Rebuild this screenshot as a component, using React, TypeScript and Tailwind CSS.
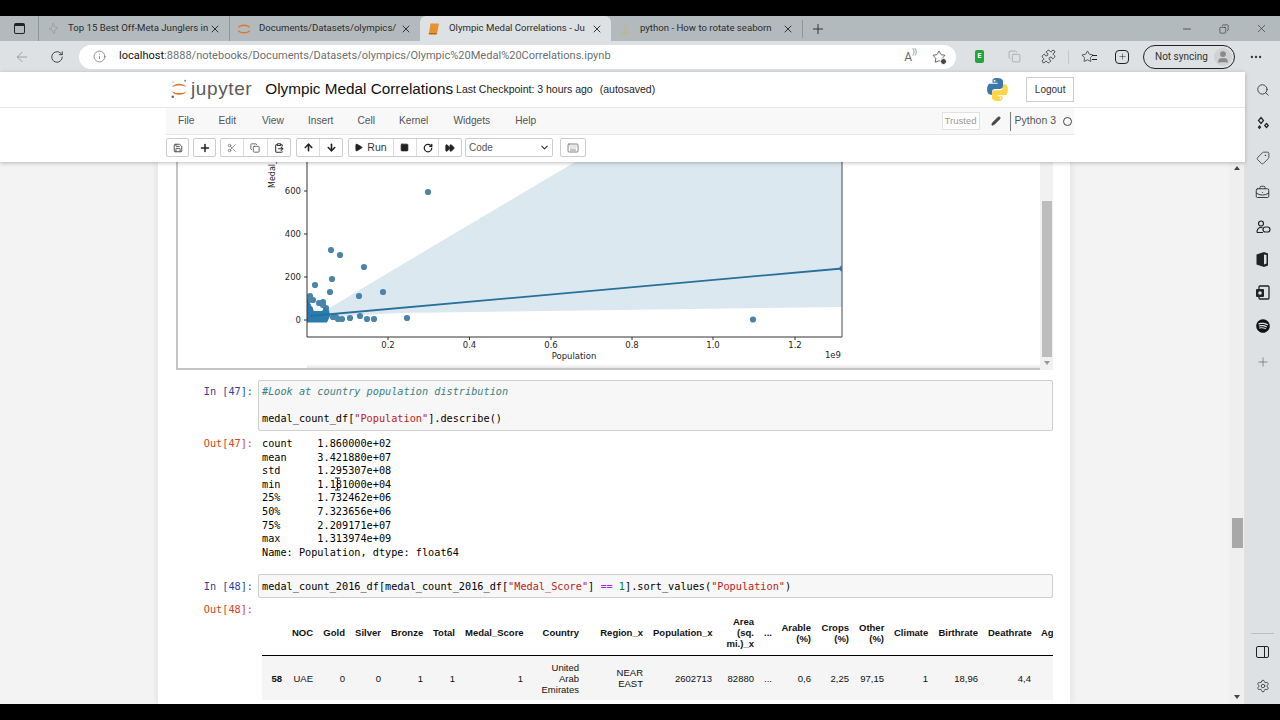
import {
  ArrowDown,
  ArrowLeft,
  ArrowUp,
  BriefcaseBusiness,
  ChevronDown,
  ClipboardPaste,
  Copy,
  FastForward,
  Info,
  Keyboard,
  Minus,
  MoreHorizontal,
  Pencil,
  Play,
  Plus,
  Puzzle,
  RotateCw,
  Save,
  Scissors,
  Search,
  Settings,
  Square,
  Star,
  Tag,
  User,
  X,
} from "lucide-react";
import { FaSpotify } from "react-icons/fa";

const tabs = [
  { title: "Top 15 Best Off-Meta Junglers in", icon: "game", divider: true },
  { title: "Documents/Datasets/olympics/", icon: "jupyter", divider: true },
  { title: "Olympic Medal Correlations - Ju", icon: "book", active: true },
  { title: "python - How to rotate seaborn", icon: "so" },
];

const outputLines = [
  "count    1.860000e+02",
  "mean     3.421880e+07",
  "std      1.295307e+08",
  "min      1.181000e+04",
  "25%      1.732462e+06",
  "50%      7.323656e+06",
  "75%      2.209171e+07",
  "max      1.313974e+09",
  "Name: Population, dtype: float64",
];

const colWidths = [25, 31, 32, 36, 42, 32, 68, 56, 64, 69, 42, 17, 40, 38, 35, 44, 50, 53, 60];

const headers = [
  "",
  "NOC",
  "Gold",
  "Silver",
  "Bronze",
  "Total",
  "Medal_Score",
  "Country",
  "Region_x",
  "Population_x",
  "Area (sq. mi.)_x",
  "...",
  "Arable (%)",
  "Crops (%)",
  "Other (%)",
  "Climate",
  "Birthrate",
  "Deathrate",
  "Ag",
];

const row = [
  "58",
  "UAE",
  "0",
  "0",
  "1",
  "1",
  "1",
  "United Arab Emirates",
  "NEAR\nEAST",
  "2602713",
  "82880",
  "...",
  "0,6",
  "2,25",
  "97,15",
  "1",
  "18,96",
  "4,4",
  "",
];

const scatter = [
  [428, 192], [331, 250], [340, 255], [364, 267], [332, 279], [315, 285], [330, 292], [359, 296],
  [383, 292], [407, 318], [350, 318], [360, 316], [367, 319], [374, 319], [310, 296], [313, 300],
  [319, 303], [323, 302], [326, 308], [323, 305], [333, 317], [336, 317], [338, 319], [342, 319],
  [753, 319.5], [842.5, 268.5], [308, 301], [308, 306], [310, 309],
];

function JupyterMark({ size = 22 }: { size?: number }) {
  return (
    <svg width={size} height={size + 3} viewBox="0 0 22 25" fill="none">
      <path d="M2.5 10.5C4 5 17 5 19 10.5C16 7.6 6 7.6 2.5 10.5Z" fill="#e3762c" />
      <path d="M2.5 15C4 20.5 17 20.5 19 15C16 18 6 18 2.5 15Z" fill="#e3762c" />
      <circle cx="17.5" cy="3" r="1.2" fill="#8a8a8a" />
      <circle cx="3.2" cy="21.5" r="1.5" fill="#666" />
      <circle cx="3.4" cy="4.5" r="0.8" fill="#999" />
    </svg>
  );
}

function PythonLogo() {
  const half = "M12 1C6.8 1 7.2 3.2 7.2 3.2v2.4h4.9v.8H5.3S2 6 2 11.6 4.9 17 4.9 17h1.8v-2.6s-.1-3 2.9-3h4.9s2.8 0 2.8-2.7V3.9S17 1 12 1z";
  return (
    <svg width="25" height="25" viewBox="0 0 24 24">
      <path d={half} fill="#3c78aa" />
      <circle cx="9.2" cy="3.6" r="0.9" fill="#fff" />
      <path d={half} fill="#fdd645" transform="rotate(180 12 12)" />
      <circle cx="14.8" cy="20.4" r="0.9" fill="#fff" />
    </svg>
  );
}

function TabIcon({ kind }: { kind: string }) {
  if (kind === "jupyter") {
    return (
      <svg width="14" height="14" viewBox="0 0 14 14" fill="none" stroke="#e3762c" strokeWidth="1.4">
        <path d="M1.5 5.5C3 2.5 11 2.5 12.5 5.5" />
        <path d="M1.5 8.5C3 11.5 11 11.5 12.5 8.5" />
      </svg>
    );
  }
  if (kind === "book") {
    return (
      <svg width="14" height="14" viewBox="0 0 14 14">
        <path d="M3.5 1.5h8.5l-1.8 9.5H2L3.5 1.5z" fill="#e8912d" />
        <path d="M2 11h8l-.3 1.6H2.3C1.5 12.6 1.5 11 2 11z" fill="#b9651a" />
      </svg>
    );
  }
  if (kind === "so") {
    return (
      <svg width="14" height="14" viewBox="0 0 14 14" fill="none" stroke="#c0b48e" strokeWidth="1">
        <path d="M3 9v3h8V9M5 10.5h4M5 8.5l4 .5M5.5 6.5l3.8 1.2M6.5 4.5l3.2 2.2M8.5 2.5l2 3" />
      </svg>
    );
  }
  return (
    <svg width="14" height="14" viewBox="0 0 14 14" fill="none" stroke="#9ea3a4" strokeWidth="1">
      <path d="M7 1l2 4 3 1-3 2-1 4-2-4-3-1 3-2 1-4z" />
    </svg>
  );
}

function ToolButton({ children, className = "" }: { children: React.ReactNode; className?: string }) {
  return (
    <div className={`flex items-center justify-center border-r border-[#dcdcdc] last:border-r-0 ${className}`}>
      {children}
    </div>
  );
}

function ScatterPlot() {
  const xTicks = [
    [388, "0.2"],
    [469.5, "0.4"],
    [551, "0.6"],
    [632, "0.8"],
    [713, "1.0"],
    [795, "1.2"],
  ] as const;
  const yTicks = [
    [191, "600"],
    [234, "400"],
    [277, "200"],
    [320, "0"],
  ] as const;
  return (
    <svg width="864" height="207" viewBox="176 162 864 207" className="block">
      <polygon
        points="326,310 440,242 575,162 842,162 842,307 620,310 400,313 345,316 326,316"
        fill="#dce8f0"
      />
      {scatter.map(([x, y]) => (
        <circle key={`${x}-${y}`} cx={x} cy={y} r="3.1" fill="#4a84ab" />
      ))}
      <path d="M307 299L311 306L314 311L322 311L325 307L329 310L330 316L327 322.5L307 322.5Z" fill="#2a7bae" />
      <line x1="310" y1="316" x2="842" y2="268.5" stroke="#286f9c" strokeWidth="1.8" />
      <rect x="176" y="162" width="131" height="207" fill="#fff" />
      <rect x="842" y="162" width="6" height="180" fill="#fff" />
      <path d="M307 162V337H842" fill="none" stroke="#333" strokeWidth="1" />
      <path d="M842 162V337" fill="none" stroke="#666" strokeWidth="1.2" />
      {xTicks.map(([x, label]) => (
        <g key={label}>
          <line x1={x} y1="337" x2={x} y2="340" stroke="#333" />
          <text x={x} y="348" textAnchor="middle" fontSize="8.5" fill="#262626" fontFamily="'DejaVu Sans', sans-serif">
            {label}
          </text>
        </g>
      ))}
      {yTicks.map(([y, label]) => (
        <g key={label}>
          <line x1="304" y1={y} x2="307" y2={y} stroke="#333" />
          <text x="301" y={y + 3} textAnchor="end" fontSize="8.5" fill="#262626" fontFamily="'DejaVu Sans', sans-serif">
            {label}
          </text>
        </g>
      ))}
      <text x="574" y="359" textAnchor="middle" fontSize="8.5" fill="#262626" fontFamily="'DejaVu Sans', sans-serif">
        Population
      </text>
      <text x="841" y="358" textAnchor="end" fontSize="8.5" fill="#262626" fontFamily="'DejaVu Sans', sans-serif">
        1e9
      </text>
      <text
        transform="translate(275 188) rotate(-90)"
        fontSize="8"
        fill="#262626"
        fontFamily="'DejaVu Sans', sans-serif"
      >
        Medal_
      </text>
    </svg>
  );
}

function Prompt({ kind, children }: { kind: "in" | "out"; children: React.ReactNode }) {
  return (
    <div
      className={`w-[95px] shrink-0 whitespace-pre text-right ${kind === "in" ? "text-[#303f9f]" : "text-[#d84315]"}`}
    >
      {children}
    </div>
  );
}

export default function App() {
  return (
    <div className="flex h-[720px] w-[1280px] flex-col overflow-hidden bg-black font-['Liberation_Sans',sans-serif]">
      <div className="h-4 shrink-0 bg-black" />

      {/* browser tab strip */}
      <div className="flex h-[25px] shrink-0 items-center bg-[#b3babd] font-['Roboto',sans-serif] text-[9.6px] text-[#2b2b2b]">
        <div className="flex w-[38px] shrink-0 items-center justify-center">
          <div className="h-[11px] w-[11px] rounded-[2px] border-[1.5px] border-[#222] border-t-[3px]" />
        </div>
        {tabs.map((tab) => (
          <div
            key={tab.title}
            className={`flex h-[25px] w-[191px] shrink-0 items-center gap-2 pl-[7px] pr-[8px] ${
              tab.active ? "rounded-t-md bg-[#dde1e4]" : ""
            } ${tab.divider ? "border-l border-[#8f9699]" : ""}`}
          >
            <div className="flex w-[14px] shrink-0 justify-center">
              <TabIcon kind={tab.icon} />
            </div>
            <div className="min-w-0 flex-1 whitespace-nowrap">{tab.title}</div>
            <X size={12} strokeWidth={1.8} className="shrink-0 text-[#222]" />
          </div>
        ))}
        <div className="h-[18px] w-px bg-[#8f9699]" />
        <Plus size={16} strokeWidth={1.3} className="ml-[7px] text-[#222]" />
        <div className="ml-auto flex items-center text-[#333]">
          <Minus size={12} strokeWidth={1.5} className="mr-[26px]" />
          <Copy size={10} strokeWidth={1.5} className="mr-[26px] -scale-x-100" />
          <X size={13} strokeWidth={1.2} className="mr-[12px]" />
        </div>
      </div>

      {/* address bar */}
      <div className="flex h-[31px] shrink-0 items-center bg-[#dde1e4] font-['Roboto',sans-serif] text-[#333]">
        <ArrowLeft size={16} strokeWidth={1.2} className="ml-[14px] text-[#8b9092]" />
        <RotateCw size={14} strokeWidth={1.5} className="ml-[20px] text-[#333]" />
        <div className="ml-[15px] flex h-6 w-[877px] items-center rounded-full bg-white pl-[14px]">
          <Info size={13} strokeWidth={1.3} className="text-[#666]" />
          <div className="ml-[13px] whitespace-nowrap text-[11.04px] text-[#6a6f72]">
            <span className="text-[#111]">localhost</span>:8888/notebooks/Documents/Datasets/olympics/Olympic%20Medal%20Correlations.ipynb
          </div>
          <div className="ml-auto flex items-center pr-[10px]">
            <span className="relative mr-[4px] text-[12px] text-[#666]">
              A
              <span className="absolute -right-[5px] -top-[1px] text-[7px]">))</span>
            </span>
            <span className="relative ml-[16px]">
              <Star size={14} strokeWidth={1.3} />
              <span className="absolute -bottom-px -right-px h-[7px] w-[7px] rounded-full border border-white bg-[#444]" />
            </span>
          </div>
        </div>
        <div className="ml-[19px] flex h-[13px] w-[9px] items-center justify-center rounded-[2px] bg-[#22a53b] text-[7px] font-bold text-white">
          E
        </div>
        <Copy size={13} strokeWidth={1.5} className="ml-[24px] text-[#a2a6a8]" />
        <Puzzle size={15} strokeWidth={1.3} className="ml-[20px] text-[#222]" />
        <div className="ml-[12px] h-[14px] w-px bg-[#c5c9cc]" />
        <div className="relative ml-[12px]">
          <Star size={13} strokeWidth={1.3} className="text-[#222]" />
          <div className="absolute -right-[3px] top-[5px] h-[5px] w-[5px] border-y border-[#222] bg-[#dde1e4]" />
        </div>
        <div className="relative ml-[21px] h-[14px] w-[14px] rounded-[4px] border-[1.3px] border-[#222]">
          <Plus size={9} strokeWidth={1.5} className="absolute left-[1.5px] top-[1.5px]" />
        </div>
        <div className="ml-[14px] flex h-[24px] w-[92px] items-center rounded-full border border-[#222] pl-[11px] pr-[2px] text-[10px]">
          Not syncing
          <div className="ml-auto flex h-[18px] w-[18px] items-center justify-center rounded-full bg-[#cfd1d2]">
            <User size={14} fill="#8a8a8a" stroke="#8a8a8a" />
          </div>
        </div>
        <MoreHorizontal size={14} className="ml-[14px] text-[#333]" />
      </div>

      {/* page + edge sidebar */}
      <div className="flex h-[632px] shrink-0">
        <div className="flex w-[1245px] shrink-0 flex-col bg-white">
          <div className="relative z-10 shrink-0 bg-white shadow-[0_1px_4px_rgba(0,0,0,0.25)]">
            <div className="flex h-[36px] items-center border-b border-[#e7e7e7] pb-px pl-[170px]">
              <JupyterMark size={19} />
              <div className="ml-[2px] text-[19px] tracking-[0.6px] text-[#5a5a5a]">jupyter</div>
              <div className="ml-[13px] text-[15.3px] text-[#111]">Olympic Medal Correlations</div>
              <div className="ml-[3px] pt-[2px] text-[10.5px] text-[#222]">Last Checkpoint: 3 hours ago</div>
              <div className="ml-[7px] pt-[2px] text-[10.5px] text-[#222]">(autosaved)</div>
              <div className="ml-[330px] flex items-center">
                <PythonLogo />
                <div className="ml-[16px] flex h-[25px] w-[48px] items-center justify-center border border-[#ccc] text-[10px] text-[#333]">
                  Logout
                </div>
              </div>
            </div>
            <div className="ml-[166px] flex h-[27px] w-[908px] items-center border-b border-[#e7e7e7] bg-[#f8f8f8] pl-3 text-[10.2px] text-[#555]">
              <span>File</span>
              <span className="ml-[24px]">Edit</span>
              <span className="ml-[26px]">View</span>
              <span className="ml-[24px]">Insert</span>
              <span className="ml-[24px]">Cell</span>
              <span className="ml-[24px]">Kernel</span>
              <span className="ml-[25px]">Widgets</span>
              <span className="ml-[25px]">Help</span>
              <div className="ml-auto flex h-[18px] w-[38px] items-center justify-center border border-[#e2e2e2] bg-white text-[9.5px] text-[#999]">
                Trusted
              </div>
              <Pencil size={10} fill="#444" className="ml-[11px] text-[#444]" />
              <div className="ml-[9px] h-[19px] w-px bg-[#777]" />
              <div className="ml-[4px] text-[10.5px] text-[#555]">Python 3</div>
              <div className="ml-[7px] mr-[2px] h-[9px] w-[9px] rounded-full border-[1.5px] border-[#444]" />
            </div>
            <div className="flex h-[27px] items-center pb-[2px] pl-[166px]">
              <div className="flex h-[19px] w-[23px] items-center justify-center rounded-[2px] border border-[#ccc]">
                <Save size={10} strokeWidth={2} className="text-[#333]" />
              </div>
              <div className="ml-[4px] flex h-[19px] w-[23px] items-center justify-center rounded-[2px] border border-[#ccc]">
                <Plus size={12} strokeWidth={3} className="text-[#222]" />
              </div>
              <div className="ml-[4px] flex w-[71px] rounded-[2px] border border-[#ccc]">
                <ToolButton className="h-[17px] flex-1">
                  <Scissors size={10} strokeWidth={2} className="text-[#777]" />
                </ToolButton>
                <ToolButton className="h-[17px] flex-1">
                  <Copy size={10} strokeWidth={2} className="text-[#555]" />
                </ToolButton>
                <ToolButton className="h-[17px] flex-1">
                  <ClipboardPaste size={10} strokeWidth={2.5} className="text-[#333]" />
                </ToolButton>
              </div>
              <div className="ml-[5px] flex w-[47px] rounded-[2px] border border-[#ccc]">
                <ToolButton className="h-[17px] flex-1">
                  <ArrowUp size={11} strokeWidth={3.5} className="text-[#222]" />
                </ToolButton>
                <ToolButton className="h-[17px] flex-1">
                  <ArrowDown size={11} strokeWidth={3.5} className="text-[#222]" />
                </ToolButton>
              </div>
              <div className="ml-[5px] flex w-[114px] rounded-[2px] border border-[#ccc]">
                <ToolButton className="h-[17px] w-[45px] gap-[4px] pr-[1px]">
                  <Play size={9} fill="#222" className="text-[#222]" />
                  <span className="text-[10.5px] text-[#333]">Run</span>
                </ToolButton>
                <ToolButton className="h-[17px] flex-1">
                  <Square size={9} fill="#222" className="text-[#222]" />
                </ToolButton>
                <ToolButton className="h-[17px] flex-1">
                  <RotateCw size={10} strokeWidth={3} className="text-[#222]" />
                </ToolButton>
                <ToolButton className="h-[17px] flex-1">
                  <FastForward size={10} fill="#222" className="text-[#222]" />
                </ToolButton>
              </div>
              <div className="ml-[3px] flex h-[19px] w-[88px] items-center rounded-[2px] border border-[#ccc] pl-[3px] pr-[2px] text-[10px] text-[#555]">
                Code
                <ChevronDown size={11} strokeWidth={2.5} className="ml-auto text-[#333]" />
              </div>
              <div className="ml-[7px] flex h-[19px] w-[26px] items-center justify-center rounded-[2px] border border-[#ccc]">
                <Keyboard size={12} strokeWidth={1.8} className="text-[#777]" />
              </div>
            </div>
          </div>

          {/* notebook scroll area */}
          <div className="flex min-h-0 flex-1 overflow-hidden bg-[#f3f3f3]">
            <div className="ml-[158px] w-[912px] shrink-0 bg-white font-['DejaVu_Sans_Mono',monospace] text-[10.22px] leading-[13.6px] text-black shadow-[0_0_8px_rgba(0,0,0,0.1)]">
              <div className="ml-[18px] flex h-[208px] w-[877px]">
                <div className="h-[208px] w-[864px] overflow-hidden border-b-2 border-l-2 border-[#c4c4c4] bg-white shadow-[inset_2px_-2px_3px_rgba(0,0,0,0.1)]">
                  <div className="-ml-[2px]">
                    <ScatterPlot />
                  </div>
                </div>
                <div className="flex w-[13px] flex-col items-center bg-[#f1f1f1]">
                  <div className="mt-[39px] h-[156px] w-[10px] bg-[#bdbdbd]" />
                  <div className="mt-[4px] h-0 w-0 border-x-[3px] border-t-[4px] border-x-transparent border-t-[#999]" />
                </div>
              </div>

              <div className="mt-[10px] flex">
                <Prompt kind="in">
                  <div className="pt-[5px]">In [47]:</div>
                </Prompt>
                <div className="ml-[5px] h-[51px] w-[795px] rounded-[2px] border border-[#cfcfcf] bg-[#f7f7f7] px-[3px] pt-[4px]">
                  <div className="italic text-[#408080]">#Look at country population distribution</div>
                  <div>&nbsp;</div>
                  <div>
                    medal_count_df[<span className="text-[#ba2121]">"Population"</span>].describe()
                  </div>
                </div>
              </div>

              <div className="mt-[6px] flex">
                <Prompt kind="out">Out[47]:</Prompt>
                <div className="relative ml-[5px] whitespace-pre pl-[4px]">
                  {outputLines.map((line) => (
                    <div key={line}>{line}</div>
                  ))}
                  <svg className="absolute left-[76px] top-[40px]" width="7" height="14" viewBox="0 0 7 14" fill="none" stroke="#222">
                    <path d="M1 1h5M3.5 1v12M1 13h5" />
                  </svg>
                </div>
              </div>

              <div className="mt-[15px] flex">
                <Prompt kind="in">
                  <div className="pt-[6px]">In [48]:</div>
                </Prompt>
                <div className="ml-[5px] h-[24px] w-[795px] whitespace-pre rounded-[2px] border border-[#cfcfcf] bg-[#f7f7f7] px-[3px] pt-[5px]">
                  medal_count_2016_df[medal_count_2016_df[<span className="text-[#ba2121]">"Medal_Score"</span>] <span className="text-[#aa22ff]">==</span> <span className="text-[#008800]">1</span>].sort_values(<span className="text-[#ba2121]">"Population"</span>)
                </div>
              </div>

              <div className="mt-[5px] flex">
                <Prompt kind="out">Out[48]:</Prompt>
                <div className="ml-[9px] mt-[13px] w-[791px] overflow-hidden">
                  <table className="w-[834px] table-fixed border-collapse font-['Liberation_Sans',sans-serif] text-[9.5px] leading-[11px]">
                    <colgroup>
                      {colWidths.map((width, i) => (
                        <col key={i} style={{ width }} />
                      ))}
                    </colgroup>
                    <thead>
                      <tr className="h-[39px] border-b border-black">
                        {headers.map((label, i) => (
                          <th
                            key={i}
                            className={`overflow-hidden px-[5px] pb-[6px] align-middle font-bold text-[#111] ${
                              i === 18 ? "text-left" : "text-right"
                            }`}
                          >
                            {label}
                          </th>
                        ))}
                      </tr>
                    </thead>
                    <tbody>
                      <tr className="h-[44px] bg-[#f5f5f5]">
                        {row.map((value, i) => (
                          <td
                            key={i}
                            className={`whitespace-pre-line px-[5px] text-right align-middle text-[#111] ${
                              i === 0 ? "font-bold" : ""
                            }`}
                          >
                            {value}
                          </td>
                        ))}
                      </tr>
                    </tbody>
                  </table>
                </div>
              </div>
            </div>

            <div className="ml-[159px] flex w-[16px] shrink-0 flex-col items-center bg-[#efefef] shadow-[inset_-1px_0_0_#e2e2e2]">
              <div className="mt-[4px] h-0 w-0 border-x-[3px] border-b-[4px] border-x-transparent border-b-[#444]" />
              <div className="mt-[348px] h-[30px] w-[11px] bg-[#a8a8a8]" />
              <div className="mt-[147px] h-0 w-0 border-x-[3px] border-t-[4px] border-x-transparent border-t-[#444]" />
            </div>
          </div>
        </div>

        {/* edge sidebar */}
        <div className="flex w-[35px] shrink-0 flex-col items-center bg-[#dde1e4] text-[#333]">
          <Search size={14} strokeWidth={1.5} className="mt-[11px]" />
          <svg className="mt-[19px]" width="14" height="14" viewBox="0 0 14 14" fill="none" stroke="#222" strokeWidth="1.2">
            <path d="M5 1.5l2.5 3-2.5 3-2.5-3zM10.5 7.5l1.8 2-1.8 2-1.8-2zM3.5 10l1 1.2-1 1.2-1-1.2z" />
          </svg>
          <Tag size={14} strokeWidth={1.4} className="mt-[21px] -scale-x-100" />
          <BriefcaseBusiness size={15} strokeWidth={1.5} className="mt-[20px]" />
          <svg className="mt-[19px]" width="16" height="16" viewBox="0 0 16 16" fill="none" stroke="#222" strokeWidth="1.2">
            <circle cx="6" cy="4.5" r="2.5" />
            <path d="M2 13.5c0-3 1.5-5 4-5 .5 0 1 .1 1.5.3M2 13.5h6" />
            <rect x="8" y="8" width="7" height="5" rx="2.5" />
          </svg>
          <svg className="mt-[16px]" width="15" height="17" viewBox="0 0 15 17">
            <path d="M1.5 3.5L9 1l4 1.5v12L9 16l-7.5-2.5z" fill="#222" />
            <path d="M9 3.5v10l2.5-1V4z" fill="#dde1e4" />
          </svg>
          <svg className="mt-[17px]" width="15" height="15" viewBox="0 0 15 15">
            <rect x="4" y="1" width="10" height="13" rx="1" fill="none" stroke="#222" strokeWidth="1.3" />
            <rect x="1" y="4" width="8" height="8" rx="1" fill="#222" />
            <circle cx="5" cy="8" r="1.8" fill="#dde1e4" />
          </svg>
          <FaSpotify size={14} className="mt-[19px] text-[#111]" />
          <Plus size={14} strokeWidth={1.2} className="mt-[22px] text-[#666]" />
          <div className="mt-[264px] h-px w-[23px] bg-[#bbbfc2]" />
          <div className="relative mt-[12px] h-[12px] w-[13px] rounded-[2px] border-[1.3px] border-[#222]">
            <div className="absolute bottom-0 right-[3px] top-0 w-[1.3px] bg-[#222]" />
          </div>
          <Settings size={14} strokeWidth={1.4} className="mt-[21px]" />
        </div>
      </div>

      <div className="h-4 shrink-0 bg-black" />
    </div>
  );
}
